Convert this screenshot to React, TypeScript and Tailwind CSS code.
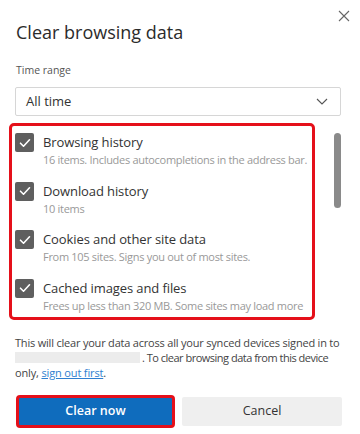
import React from "react";

const items = [
  { title: "Browsing history", sub: "16 items. Includes autocompletions in the address bar." },
  { title: "Download history", sub: "10 items" },
  { title: "Cookies and other site data", sub: "From 105 sites. Signs you out of most sites." },
  { title: "Cached images and files", sub: "Frees up less than 320 MB. Some sites may load more" },
];

function Check() {
  return (
    <div className="w-[19px] h-[19px] rounded-[2px] bg-[#5f5f5f] flex items-center justify-center shrink-0">
      <svg width="12" height="10" viewBox="0 0 12 10" fill="none">
        <path d="M1.5 5.2 L4.5 8.2 L10.5 1.8" stroke="white" strokeWidth="1.6" strokeLinecap="round" strokeLinejoin="round" />
      </svg>
    </div>
  );
}

export default function App() {
  return (
    <div
      className="relative w-[360px] h-[434px] bg-white overflow-hidden text-[#333]"
      style={{ fontFamily: '"Open Sans", "Noto Sans", sans-serif' }}
    >
      <button className="absolute right-[10px] top-[10px] w-[12px] h-[12px]">
        <svg width="12" height="12" viewBox="0 0 12 12">
          <path d="M1 1 L11 11 M11 1 L1 11" stroke="#666" strokeWidth="1.1" />
        </svg>
      </button>
      <div className="pt-[18px] pl-[16px] text-[18px] leading-[28px] text-[#2b2b2b]">Clear browsing data</div>
      <div className="mt-[16px] pl-[16px] text-[10.5px] leading-[16px] text-[#555]">Time range</div>
      <div className="mt-[9px] ml-[15px] w-[326px] h-[29px] border border-[#d6d6d6] rounded-[2px] flex items-center justify-between pl-[10px] pr-[12px]">
        <span className="text-[13px] text-[#333]">All time</span>
        <svg width="12" height="7" viewBox="0 0 12 7">
          <path d="M1 1 L6 6 L11 1" stroke="#555" strokeWidth="1.1" fill="none" />
        </svg>
      </div>
      <div className="mt-[7px] flex">
        <div className="ml-[9px] w-[306px] h-[197px] border-[3px] border-[#e5101a] rounded-[5px] overflow-hidden pl-[3px] pt-[7px] flex flex-col gap-[13.6px]">
          {items.map((it) => (
            <div key={it.title} className="flex gap-[9px]">
              <Check />
              <div className="flex flex-col">
                <span className="text-[13px] leading-[20px] text-[#333] -mt-[1px] tracking-[-0.1px]">{it.title}</span>
                <span className="text-[11px] leading-[16px] text-[#999] whitespace-nowrap tracking-[-0.3px]">{it.sub}</span>
              </div>
            </div>
          ))}
        </div>
        <div className="ml-[19px] mt-[10px] w-[7px] h-[75px] rounded-full bg-[#8a8a8a]" />
      </div>
      <div className="mt-[15px] px-[15px] text-[11px] leading-[15px] text-[#444] flex flex-col whitespace-nowrap">
        <span className="tracking-[-0.2px]">This will clear your data across all your synced devices signed in to</span>
        <span className="flex items-center">
          <span className="inline-block w-[125px] h-[11px] bg-[#ececec]" />
          <span className="ml-[2px] tracking-[-0.5px]">. To clear browsing data from this device</span>
        </span>
        <span className="tracking-[-0.15px]">
          only, <a className="text-[#2f7fd0] underline">sign out first</a>.
        </span>
      </div>
      <div className="mt-[15px] flex gap-[7px] pl-[16px] items-center">
        <button className="w-[159px] h-[33px] border-[3px] border-[#e5101a] rounded-[4px] bg-[#0f6cbd] text-white text-[12.5px] font-semibold">
          Clear now
        </button>
        <button className="w-[160px] h-[29px] rounded-[2px] bg-[#efefef] text-[#333] text-[12.5px]">Cancel</button>
      </div>
    </div>
  );
}
